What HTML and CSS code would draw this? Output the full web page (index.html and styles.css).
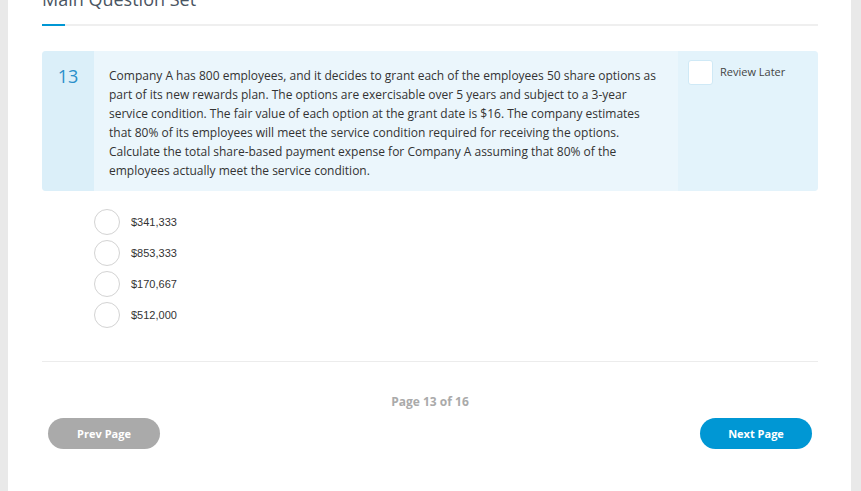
FILE: index.html
```html
<!DOCTYPE html>
<html lang="en">
<head>
    <meta charset="UTF-8">
    <meta name="viewport" content="width=device-width, initial-scale=1.0">
    <title>Main Question Set</title>
    <link rel="stylesheet" href="styles.css">
</head>
<body>
    <div class="quiz-panel">
        <h2 class="set-title">Main Question Set</h2>
        <div class="title-rule"></div>

        <div class="question-box">
            <div class="question-number">13</div>
            <div class="question-text">Company A has 800 employees, and it decides to grant each of the employees 50 share options as part of its new rewards plan. The options are exercisable over 5 years and subject to a 3-year service condition. The fair value of each option at the grant date is $16. The company estimates that 80% of its employees will meet the service condition required for receiving the options. Calculate the total share-based payment expense for Company A assuming that 80% of the employees actually meet the service condition.</div>
            <label class="review-later">
                <span class="review-box"></span>
                <span class="review-label">Review Later</span>
            </label>
        </div>

        <div class="options">
            <label class="option"><span class="radio"></span><span class="option-text">$341,333</span></label>
            <label class="option"><span class="radio"></span><span class="option-text">$853,333</span></label>
            <label class="option"><span class="radio"></span><span class="option-text">$170,667</span></label>
            <label class="option"><span class="radio"></span><span class="option-text">$512,000</span></label>
        </div>

        <div class="divider"></div>

        <div class="page-info">Page 13 of 16</div>
        <div class="pager">
            <button class="button prev">Prev Page</button>
            <button class="button next">Next Page</button>
        </div>
    </div>
</body>
</html>
```

FILE: styles.css
```css
body {
    margin: 0;
    font-family: "Open Sans", Arial, sans-serif;
    background-color: #e9e9e9;
    color: #333;
    overflow: hidden;
}
.quiz-panel {
    margin: -14px 10px 0 8px;
    background: #fff;
    padding: 0 33px 60px 34px;
    min-height: 520px;
}
.set-title {
    margin: 0;
    font-size: 18px;
    font-weight: 400;
    line-height: 26px;
    color: #4a5562;
}
.title-rule {
    height: 2px;
    margin-top: 12px;
    background: linear-gradient(to right, #0097d4 23px, #efefef 23px);
}
.question-box {
    display: flex;
    margin-top: 25px;
    border-radius: 4px;
    overflow: hidden;
    background: #ebf6fc;
}
.question-number {
    width: 52px;
    flex: none;
    background: #dbeff9;
    color: #2a8fcb;
    font-size: 18px;
    text-align: center;
    padding-top: 13px;
}
.question-text {
    flex: 1;
    padding: 15px 15px 11px;
    font-size: 12px;
    line-height: 19px;
    color: #333;
}
.review-later {
    width: 140px;
    flex: none;
    box-sizing: border-box;
    background: #e3f3fb;
    display: flex;
    align-items: flex-start;
    padding: 9px 0 0 10px;
}
.review-box {
    width: 23px;
    height: 23px;
    background: #fff;
    border: 1px solid #cfe9f6;
    border-radius: 3px;
}
.review-label {
    margin-left: 7px;
    margin-top: 4px;
    font-size: 11px;
    color: #444;
}
.options {
    margin-top: 18px;
    padding-left: 52px;
}
.option {
    display: flex;
    align-items: center;
    margin-bottom: 5px;
}
.radio {
    width: 24px;
    height: 24px;
    border: 1px solid #d3d3d3;
    border-radius: 50%;
    background: #fff;
}
.option-text {
    margin-left: 11px;
    font-family: "Liberation Sans", Arial, sans-serif;
    font-size: 11px;
    color: #333;
}
.divider {
    height: 1px;
    background: #ececec;
    margin-top: 33px;
}
.page-info {
    margin-top: 31px;
    text-align: center;
    font-size: 12px;
    font-weight: 700;
    color: #aaa;
}
.pager {
    display: flex;
    justify-content: space-between;
    padding: 0 6px;
    margin-top: 8px;
}
.button {
    width: 112px;
    height: 31px;
    border: none;
    border-radius: 16px;
    color: #fff;
    font-family: "Open Sans", Arial, sans-serif;
    font-size: 11px;
    font-weight: 700;
    cursor: pointer;
}
.button.prev {
    background: #aaa;
}
.button.next {
    background: #0097d4;
}
```
